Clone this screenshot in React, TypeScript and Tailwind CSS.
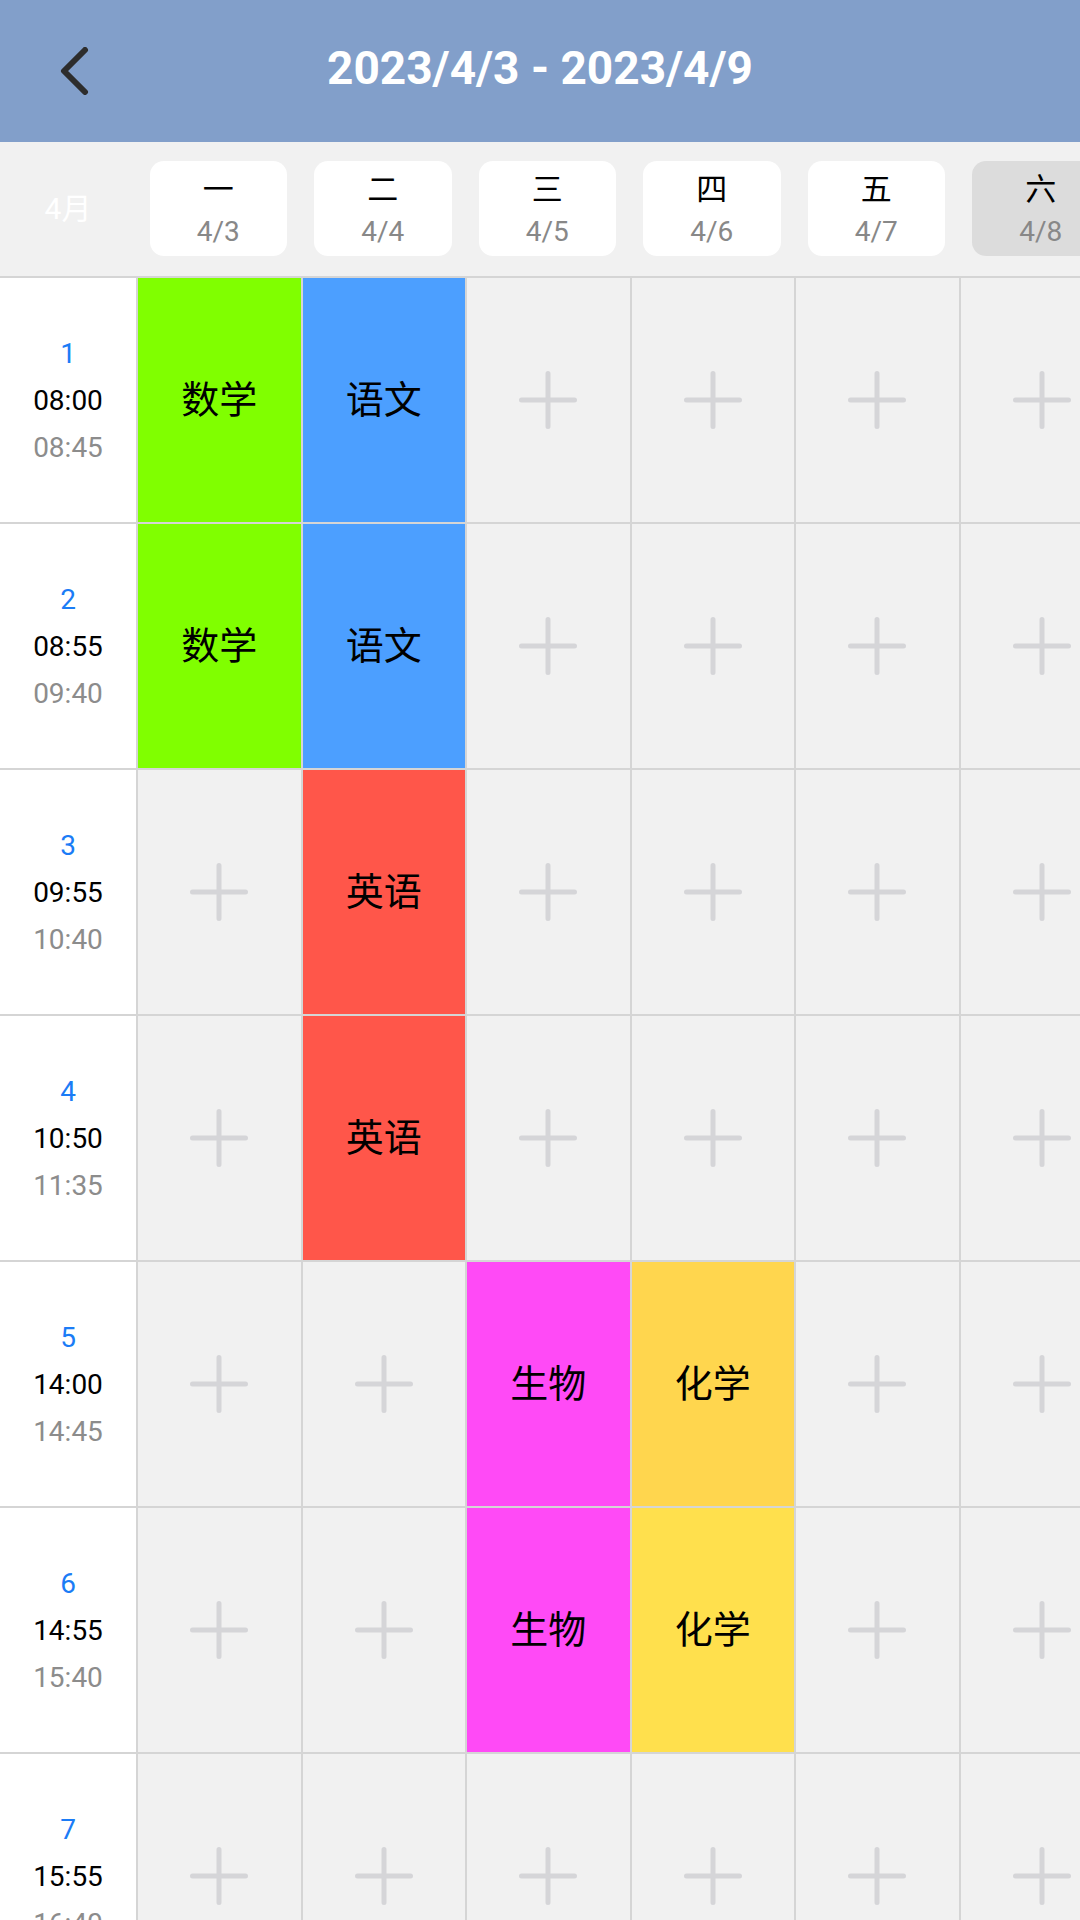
import React from 'react';

type Lesson = { name: string; color: string };

const days = [
  { label: '一', date: '4/3' },
  { label: '二', date: '4/4' },
  { label: '三', date: '4/5' },
  { label: '四', date: '4/6' },
  { label: '五', date: '4/7' },
  { label: '六', date: '4/8', weekend: true },
  { label: '日', date: '4/9', weekend: true },
];

const periods = [
  { no: 1, start: '08:00', end: '08:45' },
  { no: 2, start: '08:55', end: '09:40' },
  { no: 3, start: '09:55', end: '10:40' },
  { no: 4, start: '10:50', end: '11:35' },
  { no: 5, start: '14:00', end: '14:45' },
  { no: 6, start: '14:55', end: '15:40' },
  { no: 7, start: '15:55', end: '16:40' },
  { no: 8, start: '16:50', end: '17:35' },
];

// key: `${period}-${dayIndex}`
const lessons: Record<string, Lesson> = {
  '1-0': { name: '数学', color: 'bg-[#80ff00]' },
  '1-1': { name: '语文', color: 'bg-[#4c9fff]' },
  '2-0': { name: '数学', color: 'bg-[#80ff00]' },
  '2-1': { name: '语文', color: 'bg-[#4c9fff]' },
  '3-1': { name: '英语', color: 'bg-[#ff564a]' },
  '4-1': { name: '英语', color: 'bg-[#ff564a]' },
  '5-2': { name: '生物', color: 'bg-[#ff4af6]' },
  '5-3': { name: '化学', color: 'bg-[#ffd64e]' },
  '6-2': { name: '生物', color: 'bg-[#ff4af6]' },
  '6-3': { name: '化学', color: 'bg-[#ffe04d]' },
};

const PlusIcon: React.FC = () => (
  <svg width="58" height="58" viewBox="0 0 58 58" fill="none">
    <path d="M29 2.5V55.5M2.5 29H55.5" stroke="#d5d5d8" strokeWidth="5" strokeLinecap="round" />
  </svg>
);

const App: React.FC = () => {
  return (
    <div className="w-[1080px] h-[1920px] overflow-hidden bg-[#f1f1f1] font-['Roboto','Noto_Sans_CJK_SC',sans-serif]">
      {/* top bar */}
      <div className="h-[142px] bg-[#829fca] grid grid-cols-[136px_1fr_136px] items-center">
        <div className="pl-[58px] flex items-center">
          <svg width="34" height="48" viewBox="0 0 34 48" fill="none">
            <path d="M27 3L6 24L27 45" stroke="#2d2d2d" strokeWidth="6" strokeLinecap="round" strokeLinejoin="round" />
          </svg>
        </div>
        <h1 className="text-center text-white font-bold text-[46px] leading-none -mt-[6px]">
          2023/4/3 - 2023/4/9
        </h1>
        <div />
      </div>

      {/* week header */}
      <div className="flex h-[136px] border-b-2 border-[#d5d5d5]">
        <div className="w-[136px] shrink-0 flex items-center justify-center text-white text-[30px] pb-[2px]">
          4月
        </div>
        {days.map((d) => (
          <div key={d.date} className="w-[164.5px] shrink-0 px-[13.5px] flex items-center pb-[2px]">
            <div
              className={`w-full h-[95px] rounded-[14px] flex flex-col items-center pt-[11px] ${
                d.weekend ? 'bg-[#dcdcdc]' : 'bg-white'
              }`}
            >
              <span className="text-[31px] leading-[36px] text-black">{d.label}</span>
              <span className="mt-[6px] text-[28px] leading-[36px] text-[#888888]">{d.date}</span>
            </div>
          </div>
        ))}
      </div>

      {/* timetable */}
      {periods.map((p) => (
        <div key={p.no} className="flex h-[246px] border-b-2 border-[#d5d5d5]">
          <div className="w-[136px] shrink-0 bg-white flex flex-col items-center justify-center text-[28px] leading-[47px]">
            <span className="text-[#1b7cf6]">{p.no}</span>
            <span className="text-black">{p.start}</span>
            <span className="text-[#8c8c8c]">{p.end}</span>
          </div>
          {days.map((d, i) => {
            const lesson = lessons[`${p.no}-${i}`];
            return (
              <div
                key={d.date}
                className={`w-[164.5px] shrink-0 border-l-2 border-[#d5d5d5] flex items-center justify-center ${
                  lesson ? lesson.color : 'bg-[#f1f1f1]'
                }`}
              >
                {lesson ? (
                  <span className="text-[38px] text-black">{lesson.name}</span>
                ) : (
                  <PlusIcon />
                )}
              </div>
            );
          })}
        </div>
      ))}
    </div>
  );
};

export default App;
